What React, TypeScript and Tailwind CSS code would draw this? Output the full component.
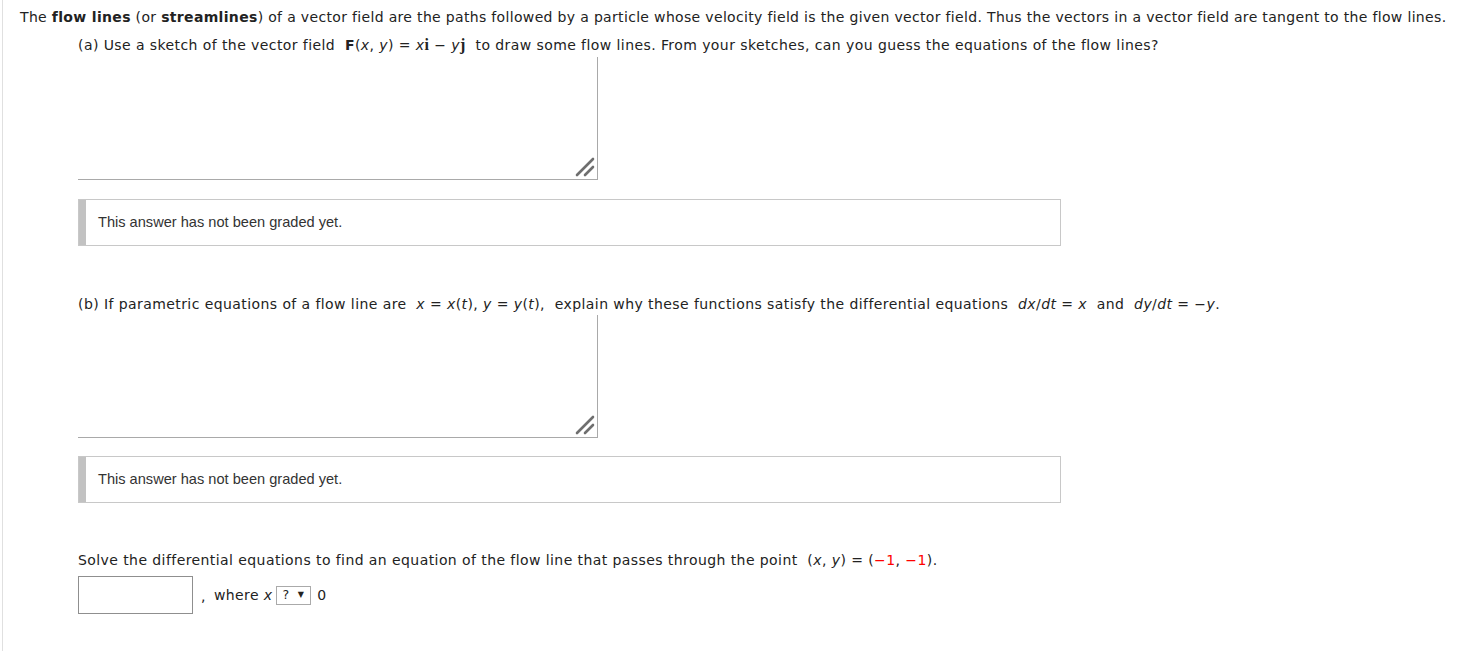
import React from "react";

const serif = { fontFamily: '"Liberation Serif", serif' };

function Graded() {
  return (
    <div className="flex w-[983px] h-[47px] border border-[#c8c8c8] bg-white">
      <div className="w-[7px] bg-[#c2c2c2]" />
      <div className="flex items-center pl-[12px] text-[14.6px] tracking-normal text-[#333] font-['Liberation_Sans',sans-serif]">
        This answer has not been graded yet.
      </div>
    </div>
  );
}

function Answer() {
  return (
    <div className="relative w-[520px] h-[123px]">
      <textarea
        className="block w-full h-full resize-none border-r border-b border-[#a9a9a9] outline-none bg-white"
        defaultValue=""
      />
      <svg className="absolute right-[3px] bottom-[3px]" width="20" height="20" viewBox="0 0 20 20">
        <line x1="2" y1="18" x2="18" y2="2" stroke="#6f6f6f" strokeWidth="2.6" strokeLinecap="round" />
        <line x1="10" y1="18" x2="18" y2="10" stroke="#6f6f6f" strokeWidth="2.6" strokeLinecap="round" />
      </svg>
    </div>
  );
}

export default function App() {
  return (
    <div className="min-h-[651px] bg-white ml-[2px] border-l border-[#e0e0e0] text-[#222] font-['DejaVu_Sans',sans-serif] text-[14px] tracking-[0.33px]">
      <div className="pl-[17px] pt-[7px]">
        <p className="leading-[20px]">
          The <b>flow lines</b> (or <b>streamlines</b>) of a vector field are the paths followed by a particle whose
          velocity field is the given vector field. Thus the vectors in a vector field are tangent to the flow lines.
        </p>
        <div className="pl-[58px] tracking-[0.42px]">
          <p className="leading-[20px] mt-[8px]">
            (a) Use a sketch of the vector field&nbsp; <b>F</b>(<i>x</i>, <i>y</i>) = <i>x</i>
            <b style={serif} className="text-[16px]">i</b> − <i>y</i>
            <b style={serif} className="text-[16px]">j</b>&nbsp; to draw some flow lines. From your sketches, can you
            guess the equations of the flow lines?
          </p>
          <div className="mt-[2px]">
            <Answer />
          </div>
          <div className="mt-[19px]">
            <Graded />
          </div>
          <p className="leading-[20px] mt-[48px]">
            (b) If parametric equations of a flow line are&nbsp; <i>x</i> = <i>x</i>(<i>t</i>), <i>y</i> ={" "}
            <i>y</i>(<i>t</i>),&nbsp; explain why these functions satisfy the differential equations&nbsp;{" "}
            <i>dx</i>/<i>dt</i> = <i>x</i>&nbsp; and&nbsp; <i>dy</i>/<i>dt</i> = −<i>y</i>.
          </p>
          <div className="mt-[1px]">
            <Answer />
          </div>
          <div className="mt-[18px]">
            <Graded />
          </div>
          <p className="leading-[20px] mt-[47px]">
            Solve the differential equations to find an equation of the flow line that passes through the point&nbsp; (
            <i>x</i>, <i>y</i>) = (<span className="text-[#ff0000]">−1</span>,{" "}
            <span className="text-[#ff0000]">−1</span>).
          </p>
          <div className="flex items-center mt-[6px]">
            <input className="w-[115px] h-[38px] border border-[#8f8f8f] outline-none bg-white" />
            <span className="ml-[8px] mt-[2px]">,</span>
            <span className="ml-[8px]">
              where <i>x</i>
            </span>
            <span className="ml-[3px] flex items-center h-[19px] pl-[6px] pr-[6px] border border-[#aaa] text-[12.5px] gap-[8px]">
              ? <span className="text-[8px]">▼</span>
            </span>
            <span className="ml-[6px]">0</span>
          </div>
        </div>
      </div>
    </div>
  );
}
